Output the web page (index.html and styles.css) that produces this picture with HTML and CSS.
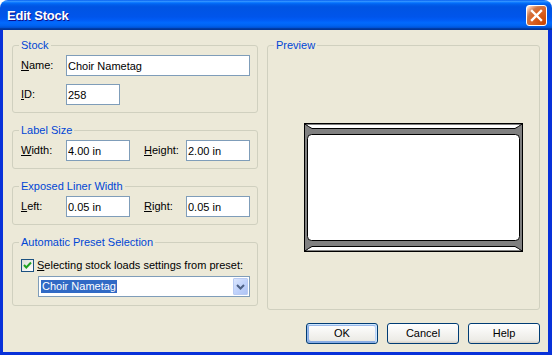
FILE: index.html
```html
<!DOCTYPE html>
<html lang="en">
<head>
  <meta charset="UTF-8" />
  <title>Edit Stock</title>
  <link rel="stylesheet" href="styles.css">
</head>
<body>

  <div class="window">
    <!-- title bar -->
    <div class="titlebar">
      <span class="title">Edit Stock</span>
      <button class="close" aria-label="Close">
        <svg width="13" height="13" viewBox="0 0 13 13">
          <path d="M2 2 L11 11 M11 2 L2 11" stroke="#fff" stroke-width="2.4" stroke-linecap="square" />
        </svg>
      </button>
    </div>

    <div class="dialog">
      <div class="panes">
        <div class="left">

          <fieldset class="group">
            <legend>Stock</legend>
            <div class="row">
              <label class="lbl"><u>N</u>ame:</label>
              <input class="field name" type="text" value="Choir Nametag" />
            </div>
            <div class="row gap">
              <label class="lbl"><u>I</u>D:</label>
              <input class="field id" type="text" value="258" />
            </div>
          </fieldset>

          <fieldset class="group">
            <legend>Label Size</legend>
            <div class="row">
              <label class="lbl"><u>W</u>idth:</label>
              <input class="field short" type="text" value="4.00 in" />
              <label class="lbl second"><u>H</u>eight:</label>
              <input class="field short" type="text" value="2.00 in" />
            </div>
          </fieldset>

          <fieldset class="group">
            <legend>Exposed Liner Width</legend>
            <div class="row">
              <label class="lbl"><u>L</u>eft:</label>
              <input class="field short" type="text" value="0.05 in" />
              <label class="lbl second"><u>R</u>ight:</label>
              <input class="field short" type="text" value="0.05 in" />
            </div>
          </fieldset>

          <fieldset class="group auto">
            <legend>Automatic Preset Selection</legend>
            <div class="check-row">
              <span class="checkbox">
                <svg width="11" height="11" viewBox="0 0 11 11">
                  <path d="M2 5 L4.3 7.5 L9 2.5" fill="none" stroke="#21A121" stroke-width="2" />
                </svg>
              </span>
              <span><u>S</u>electing stock loads settings from preset:</span>
            </div>
            <div class="combo">
              <span class="selected">Choir Nametag</span>
              <span class="drop">
                <svg width="15" height="17" viewBox="0 0 15 17">
                  <path d="M4 7 L7.5 10.5 L11 7" fill="none" stroke="#4D6185" stroke-width="2" />
                </svg>
              </span>
            </div>
          </fieldset>

        </div>

        <fieldset class="group preview">
          <legend>Preview</legend>
          <svg class="label-drawing" width="220" height="130" viewBox="0 0 220 130">
            <rect x="0.5" y="0.5" width="218" height="128" fill="#808080" stroke="#000" />
            <path d="M1 1 Q5 4 8 5.5 L211 5.5 Q214 4 218 1 Z" fill="#fff" stroke="#000" />
            <path d="M1 128 Q5 125 8 123.5 L211 123.5 Q214 125 218 128 Z" fill="#fff" stroke="#000" />
            <rect x="3.5" y="11.5" width="212" height="106" rx="4" fill="#fff" stroke="#000" />
          </svg>
        </fieldset>
      </div>

      <div class="buttons">
        <button class="btn default">OK</button>
        <button class="btn">Cancel</button>
        <button class="btn">Help</button>
      </div>
    </div>
  </div>

</body>
</html>
```

FILE: styles.css
```css
html, body {
  margin: 0;
  background: #ffffff;
}

body {
  font-family: 'Liberation Sans', Arial, sans-serif;
  font-size: 11px;
  line-height: 13px;
  color: #000;
}

.window {
  width: 552px;
  height: 355px;
  display: flex;
  flex-direction: column;
}

.titlebar {
  height: 30px;
  flex: none;
  display: flex;
  align-items: center;
  justify-content: space-between;
  padding: 0 5px 0 7px;
  border-radius: 8px 8px 0 0;
  background: linear-gradient(to bottom, #0058ee 0%, #3593ff 4%, #288eff 6%, #127dff 8%, #036ffc 10%, #0262ee 14%, #0057e5 20%, #0054e3 24%, #0055eb 56%, #005bf5 66%, #026afe 76%, #0062ef 86%, #0052d6 92%, #0040ab 94%, #003092 100%);
}

.title {
  color: white;
  font-weight: bold;
  font-size: 13px;
  letter-spacing: -0.2px;
  text-shadow: 1px 1px #0f1089;
}

.close {
  width: 21px;
  height: 21px;
  padding: 0;
  border: 1px solid #fff;
  border-radius: 3px;
  display: flex;
  align-items: center;
  justify-content: center;
  background: radial-gradient(circle at 90% 90%, #cc4600 0%, #dc6527 55%, #cd7546 70%, #ffccb2 90%, #fff 100%);
}

.dialog {
  flex: 1;
  background: #ece9d8;
  border-style: solid;
  border-color: #0831d9;
  border-width: 0 4px 3px 3px;
  padding: 9px 8px 0 9px;
  display: flex;
  flex-direction: column;
}

.panes {
  display: flex;
  align-items: flex-start;
  gap: 9px;
}

.left {
  width: 246px;
}

.group {
  margin: 0;
  padding: 3px 7px 7px 8px;
  border: 1px solid #d0d0bf;
  border-radius: 3px;
}

.group + .group {
  margin-top: 11px;
}

legend {
  color: #0046d5;
  padding: 0 2px;
  margin-left: -2px;
  line-height: 13px;
}

.row {
  display: flex;
  align-items: center;
}

.row.gap {
  margin-top: 8px;
}

.lbl {
  width: 45px;
  flex: none;
}

.lbl.second {
  width: 42px;
  margin-left: 14px;
}

.field {
  height: 21px;
  box-sizing: border-box;
  border: 1px solid #7f9db9;
  padding: 0 1px;
  margin: 0;
  font: inherit;
  color: #000;
  background: #fff;
}

.field.name {
  width: 184px;
}

.field.id {
  width: 54px;
}

.field.short {
  width: 64px;
}

.auto {
  padding-bottom: 8px;
}

.check-row {
  display: flex;
  align-items: center;
  gap: 3px;
  margin-top: 4px;
  height: 13px;
  padding: 3px 0 0;
}

.checkbox {
  width: 13px;
  height: 13px;
  box-sizing: border-box;
  border: 1px solid #1c5180;
  background: linear-gradient(135deg, #dcdcd7 0%, #ffffff 100%);
  display: flex;
  align-items: center;
  justify-content: center;
}

.combo {
  width: 212px;
  height: 21px;
  box-sizing: border-box;
  margin: 4px 0 0 17px;
  border: 1px solid #7f9db9;
  background: #fff;
  display: flex;
  align-items: center;
  justify-content: space-between;
  padding: 0 1px 0 2px;
}

.selected {
  background: #316ac5;
  color: #fff;
  padding: 0 1px;
  height: 13px;
}

.drop {
  width: 15px;
  height: 17px;
  box-sizing: border-box;
  border: 1px solid #b9cbf3;
  border-radius: 1px;
  background: linear-gradient(135deg, #dbe6fd 0%, #c1d3fb 50%, #aec4f5 100%);
  display: flex;
}

.drop svg {
  margin: -1px;
}

.preview {
  width: 273px;
  box-sizing: border-box;
  padding: 0 7px 0 8px;
}

.label-drawing {
  display: block;
  margin: 71px 0 56px 28px;
}

.buttons {
  display: flex;
  justify-content: flex-end;
  gap: 9px;
  margin-top: 13px;
}

.btn {
  width: 72px;
  height: 21px;
  padding: 0;
  font: inherit;
  color: #000;
  border: 1px solid #003c74;
  border-radius: 3px;
  background: linear-gradient(180deg, #ffffff 0%, #ecebe6 86%, #d6d0c5 100%);
}

.btn.default {
  box-shadow: inset -1px 1px #cee7ff, inset 1px 2px #98b8ea, inset -2px 2px #bcd4f6, inset 1px -1px #89ade4, inset 2px -2px #89ade4;
}
```
